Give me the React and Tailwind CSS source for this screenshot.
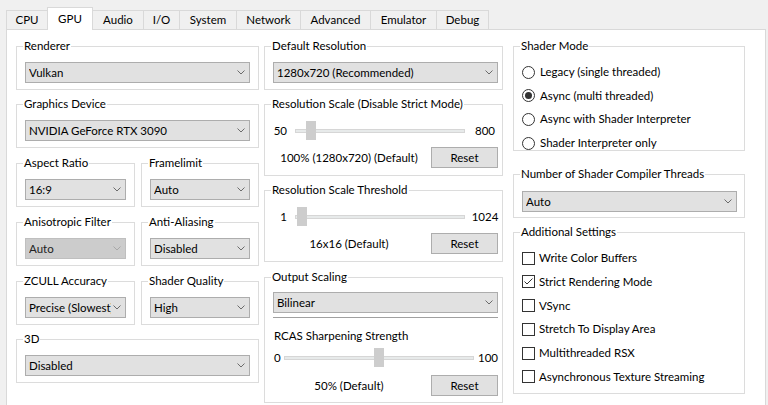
import React from "react";

const Chevron = ({ color = "#6b6b6b" }) => (
  <svg width="8" height="5" viewBox="0 0 8 5" className="shrink-0">
    <path d="M0.5 0.5L4 4L7.5 0.5" fill="none" stroke={color} strokeWidth="1" />
  </svg>
);

function Combo({ value, disabled }) {
  return (
    <div
      className={
        disabled
          ? "flex h-[21px] items-center border border-[#bfbfbf] bg-[#cccccc] pl-[3px] pr-[4px] text-[#222]"
          : "flex h-[21px] items-center border border-[#adadad] bg-[#e1e1e1] pl-[3px] pr-[4px]"
      }
    >
      <span className="min-w-0 flex-1 overflow-hidden whitespace-nowrap">{value}</span>
      <span className="ml-[2px] flex">
        <Chevron color={disabled ? "#a8a8a8" : "#6b6b6b"} />
      </span>
    </div>
  );
}

function Group({ title, className, children }) {
  return (
    <div className={"relative border border-[#dcdcdc] " + className}>
      <span className="absolute left-[6px] top-[-9px] whitespace-nowrap bg-white px-[1px] leading-[16px]">
        {title}
      </span>
      {children}
    </div>
  );
}

function Track({ frac }) {
  return (
    <div className="relative flex h-[19px] min-w-0 flex-1 items-center">
      <div className="h-[4px] w-full border border-[#d6d6d6] bg-[#e7eaea]" />
      <div
        className="absolute top-0 h-[19px] w-[10px] bg-[#cdcdcd]"
        style={{ left: `calc(${frac * 100}% - ${frac * 10}px)` }}
      />
    </div>
  );
}

function Button({ children }) {
  return (
    <div className="flex h-[21px] w-[67px] shrink-0 items-center justify-center border border-[#adadad] bg-[#e1e1e1]">
      {children}
    </div>
  );
}

function Radio({ checked, label }) {
  return (
    <div className="flex h-[14px] items-center">
      <span className="flex h-[13px] w-[13px] shrink-0 items-center justify-center rounded-full border border-[#333333] bg-white">
        {checked && <span className="h-[7px] w-[7px] rounded-full bg-[#333333]" />}
      </span>
      <span className="ml-[5px] whitespace-nowrap">{label}</span>
    </div>
  );
}

function Check({ checked, label }) {
  return (
    <div className="flex h-[14px] items-center">
      <span className="flex h-[13px] w-[13px] shrink-0 items-center justify-center border border-[#333333] bg-white">
        {checked && (
          <svg width="11" height="11" viewBox="0 0 11 11">
            <path d="M1.5 5.5L4 8L9.5 2.5" fill="none" stroke="#333333" strokeWidth="1" />
          </svg>
        )}
      </span>
      <span className="ml-[4px] whitespace-nowrap">{label}</span>
    </div>
  );
}

const tabs = [
  { name: "CPU", w: "w-[42px]" },
  { name: "GPU", w: "w-[46px]", active: true },
  { name: "Audio", w: "w-[52px]" },
  { name: "I/O", w: "w-[37px]" },
  { name: "System", w: "w-[58px]" },
  { name: "Network", w: "w-[65px]" },
  { name: "Advanced", w: "w-[71px]" },
  { name: "Emulator", w: "w-[67px]" },
  { name: "Debug", w: "w-[53px]" },
];

export default function App() {
  return (
    <div className="h-[405px] w-[768px] overflow-hidden bg-[#f0f0f0] font-[Lato,'Noto_Sans',sans-serif] text-[11.5px] leading-[16px] text-black">
      {/* Tab bar */}
      <div className="flex h-[29px] items-end pl-[6px]">
        {tabs.map((t, i) => (
          <div
            key={t.name}
            className={
              (t.active
                ? "relative z-10 -mb-px h-[23px] bg-white "
                : "h-[19px] bg-[#f0f0f0] ") +
              (i > 0 ? "-ml-px " : "") +
              "flex items-center justify-center border border-b-0 border-[#d9d9d9] " +
              t.w
            }
          >
            {t.name}
          </div>
        ))}
      </div>

      {/* Tab pane */}
      <div className="ml-[6px] flex h-[380px] w-[760px] items-start border border-[#d9d9d9] bg-white pl-[9px] pt-[16px]">
        {/* Left column */}
        <div className="flex w-[243px] flex-col">
          <Group title="Renderer" className="h-[44px] px-[8px] pt-[15px]">
            <Combo value="Vulkan" />
          </Group>
          <Group title="Graphics Device" className="mt-[14px] h-[44px] px-[8px] pt-[15px]">
            <Combo value="NVIDIA GeForce RTX 3090" />
          </Group>
          <div className="mt-[15px] flex gap-[6px]">
            <Group title="Aspect Ratio" className="h-[44px] w-[119px] px-[8px] pt-[15px]">
              <Combo value="16:9" />
            </Group>
            <Group title="Framelimit" className="h-[44px] w-[118px] px-[8px] pt-[15px]">
              <Combo value="Auto" />
            </Group>
          </div>
          <div className="mt-[15px] flex gap-[6px]">
            <Group title="Anisotropic Filter" className="h-[44px] w-[119px] px-[8px] pt-[15px]">
              <Combo value="Auto" disabled />
            </Group>
            <Group title="Anti-Aliasing" className="h-[44px] w-[118px] px-[8px] pt-[15px]">
              <Combo value="Disabled" />
            </Group>
          </div>
          <div className="mt-[15px] flex gap-[6px]">
            <Group title="ZCULL Accuracy" className="h-[44px] w-[119px] px-[8px] pt-[15px]">
              <Combo value="Precise (Slowest)" />
            </Group>
            <Group title="Shader Quality" className="h-[44px] w-[118px] px-[8px] pt-[15px]">
              <Combo value="High" />
            </Group>
          </div>
          <Group title="3D" className="mt-[14px] h-[44px] px-[8px] pt-[15px]">
            <Combo value="Disabled" />
          </Group>
        </div>

        {/* Middle column */}
        <div className="ml-[5px] flex w-[239px] flex-col">
          <Group title="Default Resolution" className="h-[44px] pl-[8px] pr-[4px] pt-[15px]">
            <Combo value="1280x720 (Recommended)" />
          </Group>
          <Group
            title="Resolution Scale (Disable Strict Mode)"
            className="mt-[14px] h-[72px] pl-[8px] pr-[4px] pt-[16px]"
          >
            <div className="flex h-[19px] items-center">
              <span className="w-[14px] text-right">50</span>
              <div className="ml-[8px] flex min-w-0 flex-1">
                <Track frac={(100 - 50) / 750} />
              </div>
              <span className="ml-[7px] flex w-[26px] justify-center whitespace-nowrap">800</span>
            </div>
            <div className="mt-[7px] flex items-center">
              <span className="flex-1 whitespace-nowrap pr-[6px] text-center">100% (1280x720) (Default)</span>
              <Button>Reset</Button>
            </div>
          </Group>
          <Group
            title="Resolution Scale Threshold"
            className="mt-[14px] h-[72px] pl-[8px] pr-[4px] pt-[16px]"
          >
            <div className="flex h-[19px] items-center">
              <span className="w-[14px] text-right">1</span>
              <div className="ml-[8px] flex min-w-0 flex-1">
                <Track frac={(16 - 1) / 1023} />
              </div>
              <span className="ml-[7px] flex w-[26px] justify-center whitespace-nowrap">1024</span>
            </div>
            <div className="mt-[7px] flex items-center">
              <span className="flex-1 whitespace-nowrap pr-[6px] text-center">16x16 (Default)</span>
              <Button>Reset</Button>
            </div>
          </Group>
          <Group title="Output Scaling" className="mt-[15px] h-[126px] pl-[8px] pr-[4px] pt-[14px]">
            <Combo value="Bilinear" />
            <div className="mt-[4px] h-px bg-[#a0a0a0]" />
            <div className="ml-[1px] mt-[10px]">RCAS Sharpening Strength</div>
            <div className="mt-[4px] flex h-[19px] items-center">
              <span className="ml-[1px]">0</span>
              <div className="ml-[3px] flex min-w-0 flex-1">
                <Track frac={0.5} />
              </div>
              <span className="ml-[4px]">100</span>
            </div>
            <div className="mt-[8px] flex items-center">
              <span className="flex-1 whitespace-nowrap pr-[6px] text-center">50% (Default)</span>
              <Button>Reset</Button>
            </div>
          </Group>
        </div>

        {/* Right column */}
        <div className="ml-[10px] flex w-[232px] flex-col">
          <Group title="Shader Mode" className="flex h-[105px] flex-col gap-[9.7px] pl-[8px] pt-[18px]">
            <Radio label="Legacy (single threaded)" />
            <Radio label="Async (multi threaded)" checked />
            <Radio label="Async with Shader Interpreter" />
            <Radio label="Shader Interpreter only" />
          </Group>
          <Group
            title="Number of Shader Compiler Threads"
            className="mt-[23px] h-[44px] pl-[8px] pr-[7px] pt-[16px]"
          >
            <Combo value="Auto" />
          </Group>
          <Group
            title="Additional Settings"
            className="mt-[14px] flex h-[162px] flex-col gap-[9.8px] pl-[8px] pt-[18px]"
          >
            <Check label="Write Color Buffers" />
            <Check label="Strict Rendering Mode" checked />
            <Check label="VSync" />
            <Check label="Stretch To Display Area" />
            <Check label="Multithreaded RSX" />
            <Check label="Asynchronous Texture Streaming" />
          </Group>
        </div>
      </div>
    </div>
  );
}
